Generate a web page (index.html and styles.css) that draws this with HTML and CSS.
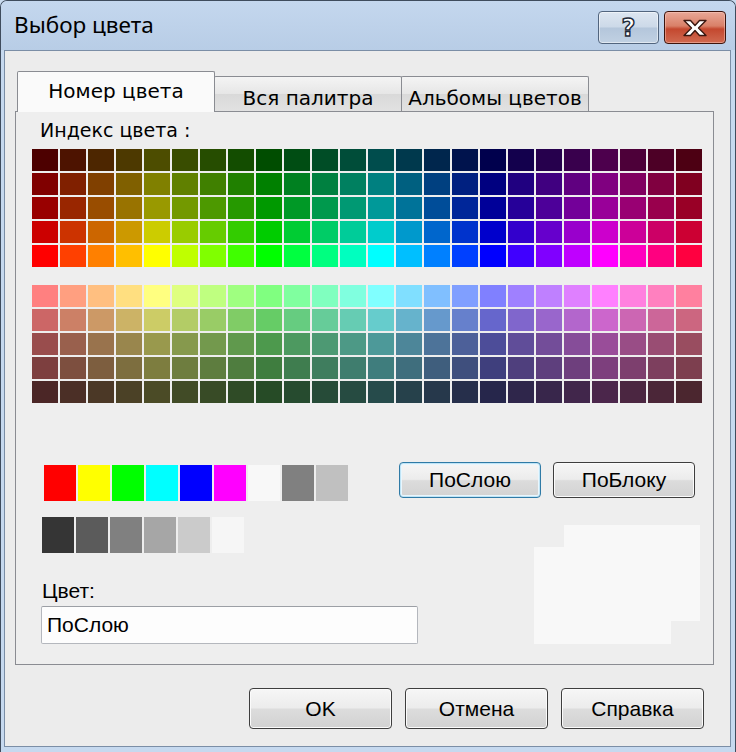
FILE: index.html
```html
<!DOCTYPE html>
<html lang="ru">
  <head>
    <meta charset="UTF-8" />
    <meta name="viewport" content="width=device-width, initial-scale=1.0" />
    <link rel="stylesheet" href="styles.css">
    <title>Выбор цвета</title>
  </head>
  <body>
    <div class="window">
      <div class="titlebar">
        <span class="title">Выбор цвета</span>
        <div class="caption">
          <div class="cap-btn help"><span class="help-mark">?</span></div>
          <div class="cap-btn close">
            <svg width="26" height="18" viewBox="0 0 26 18">
              <path d="M2 1.5h6.5L13 6.5l4.5-5H24l-7.5 7.5 7.5 7.5h-6.5L13 11.5l-4.5 5H2l7.5-7.5z" fill="#fff" stroke="#3b1710" stroke-width="1.4" stroke-linejoin="round" />
            </svg>
          </div>
        </div>
      </div>

      <div class="client">
        <div class="tabs">
          <div class="tab active">Номер цвета</div>
          <div class="tab">Вся палитра</div>
          <div class="tab">Альбомы цветов</div>
        </div>

        <div class="panel">
          <div class="group-label">Индекс цвета :</div>
          <div class="aci-grid" id="gridEven"></div>
          <div class="aci-grid odd" id="gridOdd"></div>

          <div class="lower">
            <div class="lower-row first">
              <div class="swatches">
                <div class="swatch red"></div>
                <div class="swatch yellow"></div>
                <div class="swatch green"></div>
                <div class="swatch cyan"></div>
                <div class="swatch blue"></div>
                <div class="swatch magenta"></div>
                <div class="swatch white"></div>
                <div class="swatch gray8"></div>
                <div class="swatch gray9"></div>
              </div>
              <div class="by-buttons">
                <div class="btn focused">ПоСлою</div>
                <div class="btn">ПоБлоку</div>
              </div>
            </div>

            <div class="lower-row second">
              <div class="left-stack">
                <div class="swatches grays">
                  <div class="swatch g1"></div>
                  <div class="swatch g2"></div>
                  <div class="swatch g3"></div>
                  <div class="swatch g4"></div>
                  <div class="swatch g5"></div>
                  <div class="swatch g6"></div>
                </div>
                <div class="field-label">Цвет:</div>
                <div class="field">ПоСлою</div>
              </div>
              <div class="preview"></div>
            </div>
          </div>
        </div>

        <div class="footer">
          <div class="btn wide">OK</div>
          <div class="btn wide">Отмена</div>
          <div class="btn wide">Справка</div>
        </div>
      </div>
    </div>

    <script>
      // ACI 10..249: even numbers on top grid, odd ones below
      const evenRows = [[100, 15], [100, 25], [100, 30], [100, 40], [100, 50]];
      const oddRows = [[100, 75], [50, 60], [33, 45], [33, 37], [33, 22]];

      function fillGrid(id, rows) {
        const grid = document.getElementById(id);
        rows.forEach(function (row) {
          for (let c = 0; c < 24; c++) {
            const cell = document.createElement("div");
            cell.className = "cell";
            cell.style.background = "hsl(" + c * 15 + "," + row[0] + "%," + row[1] + "%)";
            grid.appendChild(cell);
          }
        });
      }

      fillGrid("gridEven", evenRows);
      fillGrid("gridOdd", oddRows);
    </script>
  </body>
</html>
```

FILE: styles.css
```css
body {
  margin: 0;
  background: #c9dbef;
  font-family: "Liberation Sans", Arial, sans-serif;
  color: #000;
}
.window {
  width: 734px;
  height: 751px;
  display: flex;
  flex-direction: column;
  border: 1px solid #3f4c5d;
  border-bottom: none;
  border-radius: 7px 7px 0 0;
  background: #c6d9ef;
  overflow: hidden;
}

/* title bar */
.titlebar {
  height: 49px;
  flex: none;
  display: flex;
  align-items: center;
  justify-content: space-between;
  padding: 0 9px 0 13px;
  background: linear-gradient(#c4d7ee, #b8cde6);
}
.title {
  font-family: "Noto Sans", sans-serif;
  font-size: 22.5px;
  margin-top: -2px;
}
.caption {
  display: flex;
  gap: 5px;
  margin-top: 4px;
}
.cap-btn {
  height: 31px;
  border-radius: 4px;
  display: flex;
  align-items: center;
  justify-content: center;
}
.help {
  width: 59px;
  border: 1px solid #52657e;
  background: linear-gradient(#dde6f1 0%, #ccd9e8 48%, #b4c6db 52%, #c1d1e3 100%);
  box-shadow: inset 0 0 0 1px rgba(255, 255, 255, 0.5);
}
.help-mark {
  font-family: "DejaVu Sans", sans-serif;
  font-weight: bold;
  font-size: 24px;
  color: #fff;
  -webkit-text-stroke: 1.4px #1f2a38;
}
.close {
  width: 60px;
  border: 1px solid #3d140c;
  background: linear-gradient(#e8a797 0%, #d98068 45%, #c4482f 55%, #d06a51 100%);
  box-shadow: inset 0 0 0 1px rgba(255, 210, 200, 0.45);
}

/* client area */
.client {
  flex: 1;
  margin: 0 4px 5px 3px;
  border: 1px solid #7b8ea6;
  background: #ececec;
  display: flex;
  flex-direction: column;
  padding-top: 20px;
}
.tabs {
  height: 40px;
  display: flex;
  align-items: flex-end;
  margin-left: 12px;
  font-family: "DejaVu Sans", sans-serif;
  font-size: 20px;
}
.tab {
  height: 35px;
  border: 1px solid #8a8c92;
  border-bottom: none;
  border-radius: 2px 2px 0 0;
  background: linear-gradient(#f4f4f4, #e6e6e6 50%, #d9d9d9 51%, #e2e2e2);
  display: flex;
  justify-content: center;
  padding-top: 9px;
  box-sizing: border-box;
  width: 188px;
}
.tab + .tab {
  margin-left: -1px;
}
.tab.active {
  width: 198px;
  height: 41px;
  margin-bottom: -1px;
  padding-top: 7px;
  background: #fafafa;
  position: relative;
  z-index: 1;
}

.panel {
  margin: 0 16px 0 10px;
  border: 1px solid #8a8c92;
  background: #eeeeee;
  padding: 6px 0 20px 16px;
}
.group-label {
  font-family: "DejaVu Sans", sans-serif;
  font-size: 19px;
  height: 24px;
  line-height: 24px;
  margin: 0 0 7px 8px;
}
.aci-grid {
  display: grid;
  grid-template-columns: repeat(24, 26px);
  grid-auto-rows: 22px;
  gap: 2px;
}
.aci-grid.odd {
  margin-top: 18px;
}

/* lower part */
.lower {
  margin-top: 59px;
  padding-left: 10px;
}
.lower-row {
  display: flex;
  justify-content: space-between;
}
.lower-row.first {
  height: 39px;
  padding-right: 18px;
}
.lower-row.second {
  padding-right: 13px;
}
.swatches {
  display: flex;
  gap: 2px;
  margin: 3px 0 0 2px;
}
.swatch {
  width: 32px;
  height: 36px;
}
.red { background: #ff0000; }
.yellow { background: #ffff00; }
.green { background: #00ff00; }
.cyan { background: #00ffff; }
.blue { background: #0000ff; }
.magenta { background: #ff00ff; }
.white { background: #f8f8f8; }
.gray8 { background: #808080; }
.gray9 { background: #c0c0c0; }

.grays {
  margin: 16px 0 0 0;
}
.g1 { background: #353535; }
.g2 { background: #5b5b5b; }
.g3 { background: #808080; }
.g4 { background: #a6a6a6; }
.g5 { background: #cbcbcb; }
.g6 { background: #f6f6f6; }

.left-stack {
  width: 376px;
}
.field-label {
  font-size: 21px;
  height: 24px;
  line-height: 24px;
  margin-top: 26px;
}
.field {
  margin: 3px 0 0 -1px;
  height: 38px;
  box-sizing: border-box;
  border: 1px solid #b4b7bd;
  border-top-color: #9c9fa5;
  border-radius: 2px;
  background: #fdfdfd;
  font-size: 21px;
  line-height: 36px;
  padding-left: 5px;
}
.preview {
  width: 166px;
  height: 119px;
  margin-top: 24px;
  background: #f8f8f8;
  clip-path: polygon(30px 0, 166px 0, 166px 96px, 137px 96px, 137px 119px, 0 119px, 0 22px, 30px 22px);
}

/* buttons */
.by-buttons {
  display: flex;
  gap: 12px;
}
.btn {
  width: 142px;
  height: 36px;
  box-sizing: border-box;
  border: 1px solid #3e3e3e;
  border-radius: 4px;
  background: linear-gradient(#f6f6f6 0%, #ececec 48%, #dcdcdc 52%, #d2d2d2 100%);
  box-shadow: inset 0 0 0 1px #fbfbfb;
  display: flex;
  align-items: center;
  justify-content: center;
  font-size: 21px;
}
.btn.focused {
  border-color: #2f7aa6;
  box-shadow: inset 0 0 0 1px #bfe4f6, inset 0 0 0 2px #e9f6fd;
}
.footer {
  display: flex;
  justify-content: flex-end;
  gap: 13px;
  margin: 23px 26px 0 0;
}
.btn.wide {
  width: 143px;
  height: 41px;
}
```
